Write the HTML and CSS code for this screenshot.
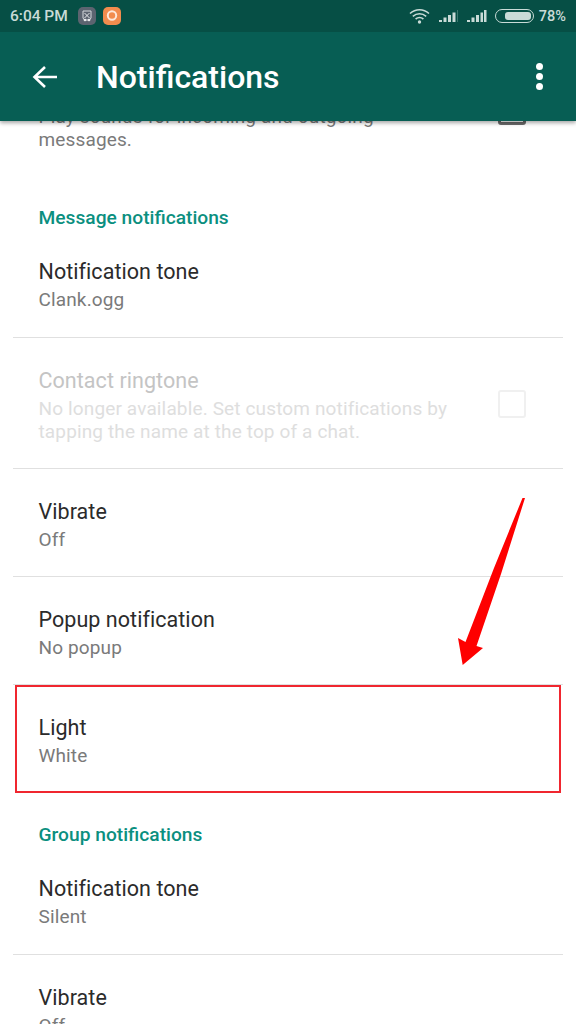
FILE: index.html
```html
<!DOCTYPE html>
<html lang="en">
<head>
<meta charset="utf-8">
<title>Notifications</title>
<link rel="stylesheet" href="styles.css">
</head>
<body>
<div class="screen">
  <div class="statusbar">
    <div class="status-left">
      <span class="time">6:04 PM</span>
      <svg class="notif" viewBox="0 0 18 18"><rect width="18" height="18" rx="5" fill="#5c6470"/><path d="M5 4h8v7l-1.500 2h-5L5 11z" fill="none" stroke="#d5d8dc" stroke-width="1"/><path d="M6.500 6l5 5M11.500 6l-5 5" stroke="#e8eaec" stroke-width="1"/><circle cx="7" cy="13" r="1.300" fill="#e8eaec"/><circle cx="11" cy="13" r="1.300" fill="#e8eaec"/></svg>
      <svg class="notif" viewBox="0 0 18 18"><rect width="18" height="18" rx="5" fill="#f28c4e"/><circle cx="9" cy="8.500" r="4.200" fill="none" stroke="#fde8da" stroke-width="2"/></svg>
    </div>
    <div class="status-right">
      <svg class="wifi" viewBox="0 0 21 16"><path d="M1 5.500C6.500.5 14.500.5 20 5.500M3.800 8.300c4-3.400 9.400-3.400 13.400 0M6.600 11c2.300-1.800 5.500-1.800 7.800 0" fill="none" stroke="#c9dbd7" stroke-width="1.600"/><circle cx="10.500" cy="14" r="1.700" fill="#c9dbd7"/></svg>
      <svg class="signal" viewBox="0 0 20 14"><path d="M0 13h3v-2H0zM4.500 13h3V8.500h-3zM9 13h3V6H9zM13.500 13h3V3.500h-3z" fill="#c9dbd7"/><path d="M18 13h1V1h-1z" fill="#3d7a70"/></svg>
      <svg class="signal" viewBox="0 0 20 14"><path d="M0 13h3v-2H0zM4.500 13h3V8.500h-3zM9 13h3V6H9zM13.500 13h2.500V3.500h-2.500zM17 13h2.500V1H17z" fill="#c9dbd7"/></svg>
      <span class="battery"><span class="battery-fill"></span></span>
      <span class="percent">78%</span>
    </div>
  </div>
  <header class="appbar">
    <svg class="back" viewBox="0 0 26 24"><path d="M25 12H3M13 2L2.500 12 13 22" fill="none" stroke="#fff" stroke-width="2.600"/></svg>
    <h1 class="title">Notifications</h1>
    <span class="menu"><i></i><i></i><i></i></span>
  </header>
  <main class="content">
    <div class="row row-first">
      <div class="text">
        <div class="sub">Play sounds for incoming and outgoing<br>messages.</div>
      </div>
      <span class="checkbox checkbox-on"></span>
    </div>
    <div class="section">Message notifications</div>
    <div class="row row-tone"><div class="name">Notification tone</div><div class="sub">Clank.ogg</div></div>
    <div class="row row-contact">
      <div class="text">
        <div class="name name-off">Contact ringtone</div>
        <div class="sub sub-off">No longer available. Set custom notifications by<br>tapping the name at the top of a chat.</div>
      </div>
      <span class="checkbox checkbox-off"></span>
    </div>
    <div class="row"><div class="name">Vibrate</div><div class="sub">Off</div></div>
    <div class="row"><div class="name">Popup notification</div><div class="sub">No popup</div></div>
    <div class="row row-light"><div class="name">Light</div><div class="sub">White</div></div>
    <div class="section section-group">Group notifications</div>
    <div class="row row-tone"><div class="name">Notification tone</div><div class="sub">Silent</div></div>
    <div class="row"><div class="name">Vibrate</div><div class="sub">Off</div></div>
  </main>
  <svg class="arrow" viewBox="0 0 80 190"><path d="M69 8L66.500 8 38 78 9.500 152 2 148 6.700 175 27 158 20.500 156 45 84Z" fill="#fe0000"/></svg>
  <div class="highlight"></div>
</div>
</body>
</html>
```
FILE: styles.css
```css
html, body { margin: 0; padding: 0; background: #fff; }
.screen {
  position: relative;
  width: 576px;
  height: 1024px;
  overflow: hidden;
  background: #fff;
  font-family: Roboto, "Liberation Sans", sans-serif;
}
.statusbar {
  position: relative;
  z-index: 3;
  height: 32px;
  box-sizing: border-box;
  padding: 0 10px;
  display: flex;
  align-items: center;
  justify-content: space-between;
  background: #064f45;
  color: #c9dbd7;
  font-size: 15.500px;
  font-weight: 500;
}
.status-left, .status-right { display: flex; align-items: center; }
.time { margin-right: 10px; }
.notif { width: 18px; height: 18px; margin-right: 7px; }
.wifi { width: 21px; height: 16px; margin-right: 9px; }
.signal { width: 20px; height: 14px; margin-right: 8px; }
.battery {
  box-sizing: border-box;
  width: 39px;
  height: 14px;
  margin: 0 5px 0 0;
  padding: 2px;
  border: 1px solid #c9dbd7;
  border-radius: 7px;
  display: flex;
}
.battery-fill { width: 78%; margin-left: 7px; background: #c9dbd7; border-radius: 3px; flex: none; }
.percent { font-size: 14.500px; }
.appbar {
  position: relative;
  z-index: 2;
  height: 89px;
  display: flex;
  align-items: center;
  padding: 0 33px 0 32px;
  background: #075e54;
  box-shadow: 0 2px 4px rgba(0,0,0,.35);
}
.back { width: 26px; height: 24px; flex: none; }
.title {
  flex: 1;
  margin: 0 0 0 38px;
  color: #fff;
  font-size: 32px;
  font-weight: 500;
}
.menu { display: flex; flex-direction: column; gap: 3px; }
.menu i { width: 7px; height: 7px; border-radius: 50%; background: #fff; }
.content { margin-top: -20px; padding: 0 13px; }
.row {
  box-sizing: border-box;
  height: 108px;
  padding: 6px 25.500px 0;
  display: flex;
  flex-direction: column;
  justify-content: center;
  border-bottom: 1px solid #e0e0e0;
  line-height: 28px;
}
.row-first {
  height: 100px;
  flex-direction: row;
  justify-content: space-between;
  align-items: flex-start;
  border-bottom: 0;
  padding-top: 4px;
  padding-right: 37px;
  line-height: 23px;
}
.row-tone { height: 105px; padding-top: 2px; }
.row-contact {
  height: 131px;
  flex-direction: row;
  justify-content: space-between;
  align-items: center;
  padding-top: 3px;
  padding-right: 37px;
  line-height: 23px;
}
.row-light { border-bottom: 0; }
.name { color: #2b2b2b; font-size: 21.500px; letter-spacing: .05px; }
.sub { color: #7a7a7a; font-size: 19px; letter-spacing: .14px; }
.row-contact .name { line-height: 28px; position: relative; top: 1px; }
.row-contact .sub { margin-top: 3px; }
.name-off { color: #c4c4c4; }
.sub-off { color: #dedede; }
.section {
  box-sizing: border-box;
  height: 32px;
  padding: 0 25.500px;
  color: #0b8f7f;
  font-size: 19.200px;
  font-weight: 500;
  line-height: 34px;
}
.section-group { margin-top: 25px; }
.checkbox { box-sizing: border-box; flex: none; width: 28px; height: 28px; border-radius: 3px; }
.checkbox-on { margin-top: -8px; border: 3px solid #6b6b6b; }
.checkbox-off { margin-top: -2px; border: 2px solid #f0f0f0; }
.highlight {
  position: absolute;
  left: 15px;
  top: 685px;
  width: 546px;
  height: 108px;
  box-sizing: border-box;
  border: 2px solid #f0262f;
}
.arrow {
  position: absolute;
  left: 456px;
  top: 490px;
  width: 80px;
  height: 190px;
}
```
